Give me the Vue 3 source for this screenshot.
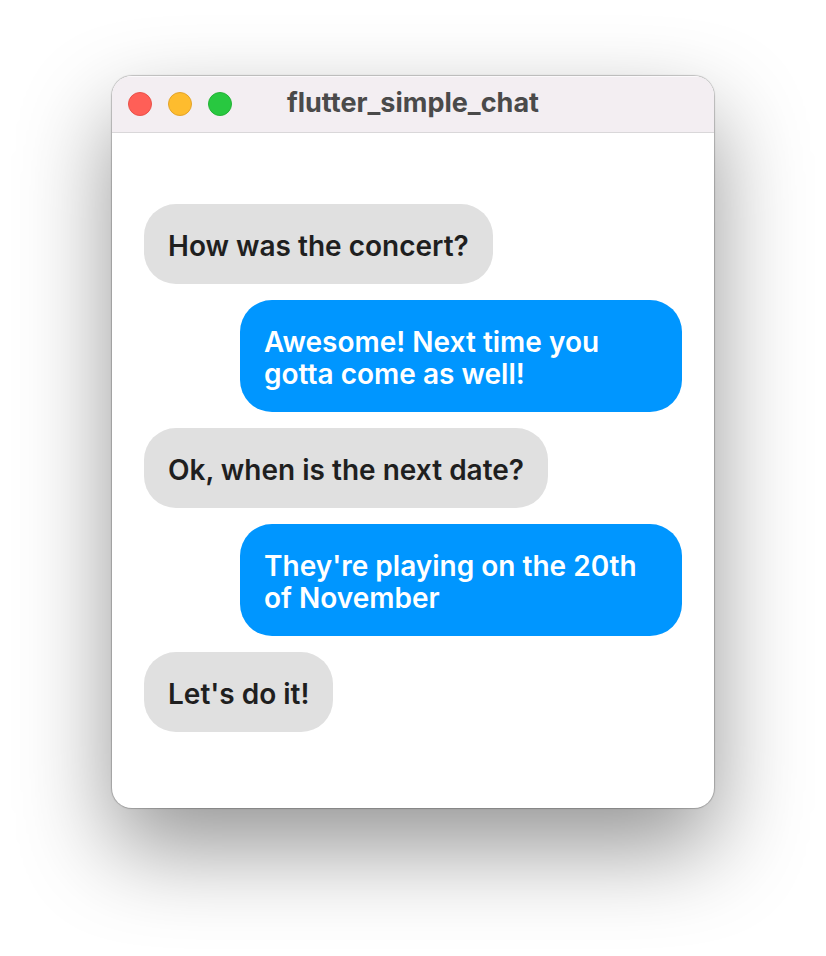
<script setup>
const messages = [
  { text: 'How was the concert?', mine: false },
  { text: 'Awesome! Next time you gotta come as well!', mine: true },
  { text: 'Ok, when is the next date?', mine: false },
  { text: "They're playing on the 20th of November", mine: true },
  { text: "Let's do it!", mine: false },
]
</script>

<template>
  <main class="desktop">
    <section class="window">
      <header class="titlebar">
        <div class="controls">
          <button class="control close" type="button" aria-label="Close"></button>
          <button class="control minimize" type="button" aria-label="Minimize"></button>
          <button class="control zoom" type="button" aria-label="Zoom"></button>
        </div>
        <h1 class="title">flutter_simple_chat</h1>
      </header>
      <div class="messages">
        <p v-for="(m, i) in messages" :key="i" class="bubble" :class="{ mine: m.mine }">{{ m.text }}</p>
      </div>
    </section>
  </main>
</template>

<style>
body {
  background: #fff;
}
</style>

<style scoped>
.desktop {
  box-sizing: border-box;
  min-height: 100vh;
  padding: 76px 112px 148px;
  overflow: hidden;
  font-family: Inter, "Liberation Sans", sans-serif;
}
.window {
  border-radius: 20px;
  background: #fff;
  overflow: hidden;
  box-shadow: 0 0 1px 1px rgba(0, 0, 0, 0.22), 0 40px 92px rgba(0, 0, 0, 0.42);
}
.titlebar {
  display: grid;
  grid-template-columns: 1fr auto 1fr;
  align-items: center;
  height: 56px;
  padding: 0 16px;
  background: #f3eef2;
  border-bottom: 1px solid #d9d7d9;
  box-shadow: inset 0 1px 0 #fbf9fb;
}
.controls {
  display: flex;
  gap: 16px;
}
.control {
  box-sizing: border-box;
  width: 24px;
  height: 24px;
  padding: 0;
  border: 1px solid;
  border-radius: 50%;
}
.close {
  background: #ff5f57;
  border-color: #e9514a;
}
.minimize {
  background: #febc2e;
  border-color: #e3a32a;
}
.zoom {
  background: #28c840;
  border-color: #24b236;
}
.title {
  margin: 0;
  padding-bottom: 2px;
  font-size: 27px;
  line-height: 32px;
  font-weight: 700;
  color: #4a4a4a;
}
.messages {
  display: flex;
  flex-direction: column;
  align-items: flex-start;
  gap: 16px;
  padding: 71px 32px 76px;
}
.bubble {
  margin: 0;
  padding: 26px 24px 22px;
  border-radius: 32px;
  background: #e0e0e0;
  color: #1f1f1f;
  font-size: 28px;
  line-height: 32px;
  font-weight: 600;
}
.mine {
  align-self: stretch;
  margin-left: 96px;
  background: #0096ff;
  color: #fff;
}
</style>
